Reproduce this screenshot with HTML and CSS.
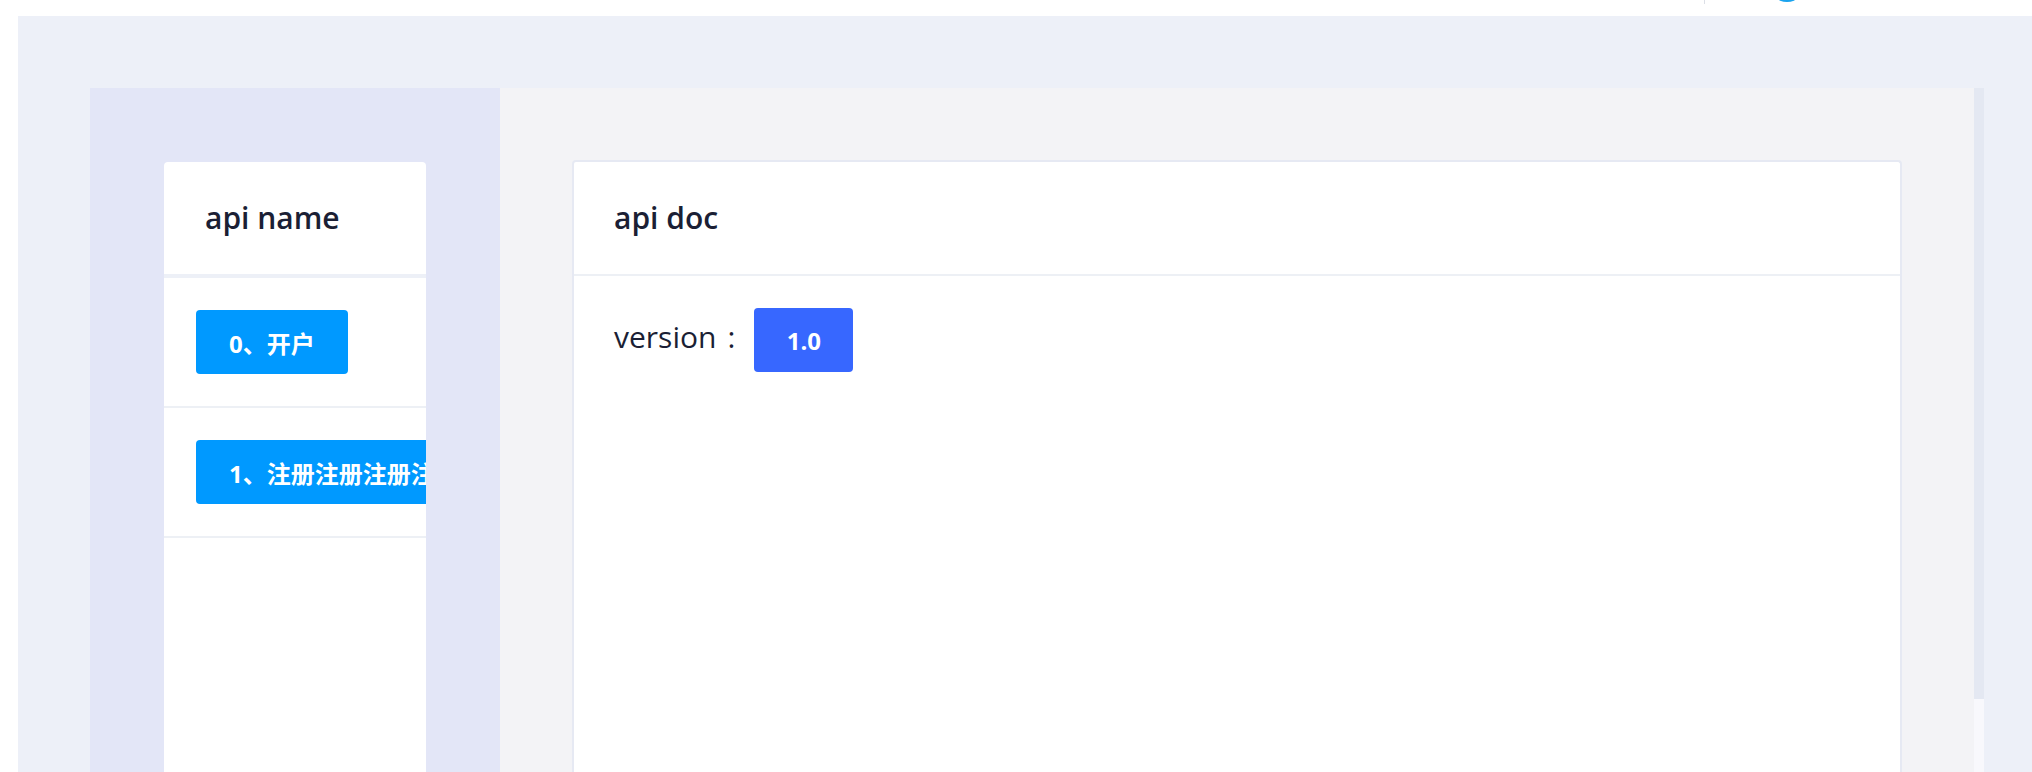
FILE: index.html
```html
<!DOCTYPE html>
<html lang="zh-CN">
<head>
<meta charset="utf-8">
<title>api doc</title>
<link rel="stylesheet" href="styles.css">
</head>
<body>
<div class="topbar">
  <span class="topbar-divider"></span>
  <span class="topbar-avatar"></span>
</div>
<div class="shell">
  <aside class="sidebar">
    <section class="card name-card">
      <header class="card-head name-head">api name</header>
      <div class="api-row"><button class="api-btn">0、开户</button></div>
      <div class="api-row"><button class="api-btn">1、注册注册注册注册注册</button></div>
    </section>
  </aside>
  <main class="content">
    <section class="card doc-card">
      <header class="card-head doc-head">api doc</header>
      <div class="doc-body">
        <div class="version-line">
          <span class="version-label">version</span>
          <span class="version-colon">:</span>
          <span class="version-badge">1.0</span>
        </div>
      </div>
    </section>
  </main>
  <div class="scroll-track"><div class="scroll-thumb"></div></div>
</div>
</body>
</html>
```
FILE: styles.css
```css
html, body {
  margin: 0;
  padding: 0;
  height: 100%;
  overflow: hidden;
  background: #ffffff;
  font-family: "Open Sans", "Noto Sans", "Noto Sans CJK SC", sans-serif;
  color: #1b1f35;
}

.topbar {
  height: 16px;
  display: flex;
  align-items: flex-start;
  padding-left: 1704px;
  overflow: hidden;
}

.topbar-divider {
  width: 1px;
  height: 4px;
  background: #dcdfe6;
}

.topbar-avatar {
  width: 36px;
  height: 36px;
  margin-left: 64px;
  margin-top: -34px;
  border-radius: 50%;
  background: #1aa3ee;
}

.shell {
  margin-left: 18px;
  height: calc(100vh - 16px);
  background: #edf0f8;
  padding: 72px 0 0 72px;
  box-sizing: border-box;
  display: flex;
  overflow: hidden;
}

.sidebar {
  flex: 0 0 410px;
  background: #e3e6f7;
  padding: 74px 0 0 74px;
  box-sizing: border-box;
}

.card {
  background: #ffffff;
  border-radius: 4px 4px 0 0;
  overflow: hidden;
  min-height: 1000px;
  box-sizing: border-box;
}

.name-card {
  width: 262px;
}

.card-head {
  height: 112px;
  line-height: 112px;
  padding-left: 41px;
  font-size: 30px;
  font-weight: 600;
}

.name-head {
  border-bottom: 4px solid #edf0f7;
}

.api-row {
  padding: 32px 0 32px 32px;
  border-bottom: 2px solid #edf0f5;
  white-space: nowrap;
}

.api-btn {
  height: 64px;
  padding: 0 33px;
  border: none;
  border-radius: 4px;
  background: #0099ff;
  color: #ffffff;
  font-family: "Open Sans", "Noto Sans CJK SC", sans-serif;
  font-size: 24px;
  font-weight: 700;
  white-space: nowrap;
}

.content {
  flex: 0 0 1474px;
  background: #f3f3f6;
  padding: 72px 72px 0 72px;
  box-sizing: border-box;
}

.doc-card {
  border: 2px solid #e6e9f3;
  border-bottom: none;
}

.doc-head {
  height: 112px;
  padding-left: 40px;
  border-bottom: 2px solid #edf0f5;
}

.doc-body {
  padding: 32px 40px;
}

.version-line {
  display: flex;
  align-items: center;
}

.version-label,
.version-colon {
  font-size: 30px;
  font-weight: 400;
  padding-bottom: 8px;
}

.version-colon {
  margin-left: 11px;
}

.version-badge {
  width: 99px;
  height: 64px;
  margin-left: 19px;
  display: flex;
  align-items: center;
  justify-content: center;
  border-radius: 4px;
  background: #3767ff;
  color: #ffffff;
  font-size: 24px;
  font-weight: 700;
}

.scroll-track {
  flex: 0 0 10px;
  background: #f8f8fc;
}

.scroll-thumb {
  height: 611px;
  background: #e4e8f2;
}
```
